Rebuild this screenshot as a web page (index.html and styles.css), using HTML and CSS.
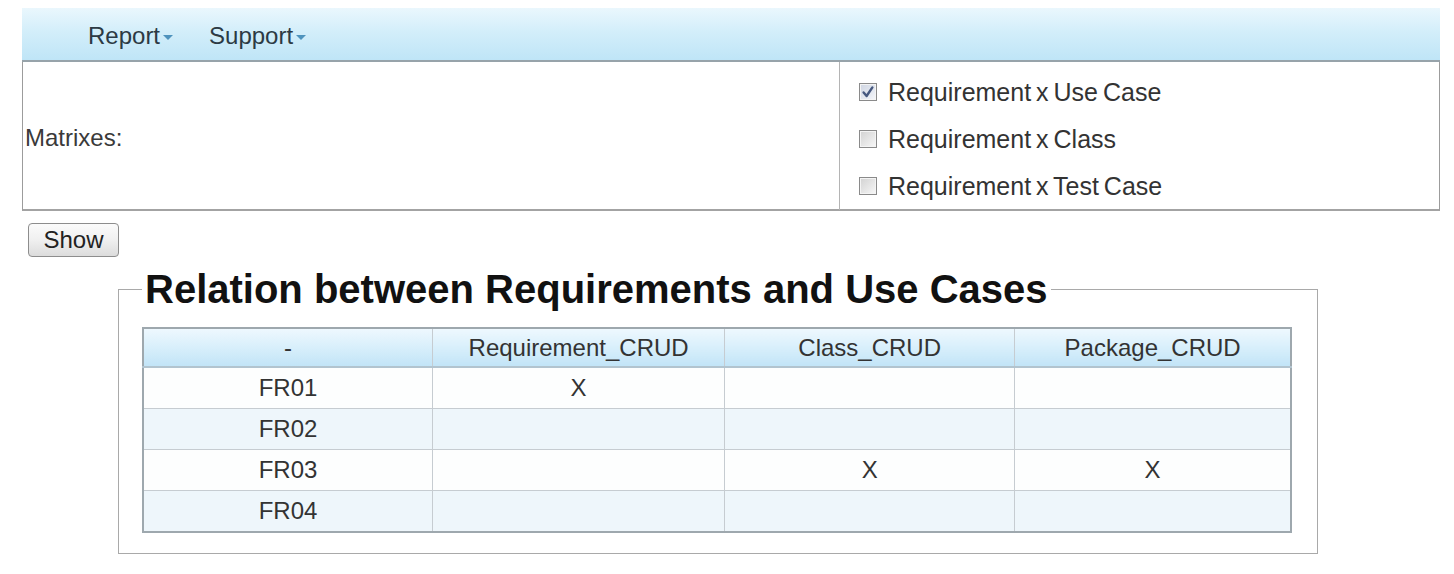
FILE: index.html
```html
<!DOCTYPE html>
<html>
<head>
<meta charset="utf-8">
<title>Matrixes</title>
<link rel="stylesheet" href="styles.css">
</head>
<body>
<div class="page">
  <nav class="navbar">
    <span class="menu-item">Report<span class="caret"></span></span>
    <span class="menu-item">Support<span class="caret"></span></span>
  </nav>
  <div class="matrix-box">
    <div class="matrix-label">Matrixes:</div>
    <div class="matrix-options">
      <label class="option"><span class="box checked"><svg viewBox="0 0 16 16" width="16" height="16"><path d="M3.6 8.4 L6.6 12 L12.4 3.4" fill="none" stroke="#46587f" stroke-width="2.4" stroke-linecap="round" stroke-linejoin="round"/></svg></span>Requirement x Use Case</label>
      <label class="option"><span class="box"></span>Requirement x Class</label>
      <label class="option"><span class="box"></span>Requirement x Test Case</label>
    </div>
  </div>
  <button class="show-btn">Show</button>
  <fieldset class="relation">
    <legend>Relation between Requirements and Use Cases</legend>
    <table class="matrix">
      <thead>
        <tr><th class="c1">-</th><th class="c2">Requirement_CRUD</th><th class="c3">Class_CRUD</th><th class="c4">Package_CRUD</th></tr>
      </thead>
      <tbody>
        <tr><td>FR01</td><td>X</td><td></td><td></td></tr>
        <tr class="alt"><td>FR02</td><td></td><td></td><td></td></tr>
        <tr><td>FR03</td><td></td><td>X</td><td>X</td></tr>
        <tr class="alt"><td>FR04</td><td></td><td></td><td></td></tr>
      </tbody>
    </table>
  </fieldset>
</div>
</body>
</html>
```
FILE: styles.css
```css
html, body {
  margin: 0;
  padding: 0;
  background: #ffffff;
}
body {
  font-family: "Liberation Sans", Arial, sans-serif;
  color: #2f2f2f;
}
.page {
  padding: 8px 14px 0 22px;
}
.navbar {
  height: 52px;
  display: flex;
  align-items: center;
  gap: 36px;
  padding-left: 66px;
  background: linear-gradient(to bottom, #eaf7fd 0%, #d3eefa 45%, #bfe5f7 100%);
  border-bottom: 2px solid #97a3aa;
  font-size: 24px;
  color: #2c3a44;
}
.menu-item {
  display: inline-flex;
  align-items: center;
  padding-top: 4px;
}
.caret {
  display: inline-block;
  width: 0;
  height: 0;
  margin-left: 3px;
  margin-top: 2px;
  border-left: 5px solid transparent;
  border-right: 5px solid transparent;
  border-top: 5px solid #4f93bd;
}
.matrix-box {
  display: grid;
  grid-template-columns: 817px 1fr;
  border: 1px solid #9c9c9c;
  border-top: none;
  border-bottom: 2px solid #a3a3a3;
  box-sizing: border-box;
  height: 149px;
}
.matrix-label {
  display: flex;
  align-items: center;
  padding-left: 2px;
  padding-top: 4px;
  font-size: 24px;
  color: #3a3a3a;
  border-right: 1px solid #b4b4b4;
}
.matrix-options {
  display: flex;
  flex-direction: column;
  padding-top: 7px;
  padding-left: 19px;
}
.option {
  height: 47px;
  display: flex;
  align-items: center;
  font-size: 25px;
  word-spacing: -2px;
  color: #333;
}
.box {
  width: 16px;
  height: 16px;
  border: 1px solid #8a8a8a;
  box-shadow: inset 0 0 0 1px #f4f4f4;
  background: linear-gradient(135deg, #d2d2d2 0%, #e8e8e8 60%, #f8f8f8 100%);
  margin-right: 11px;
  display: inline-flex;
  align-items: center;
  justify-content: center;
  flex: none;
  margin-top: -2px;
}
.box svg {
  display: block;
}
.box.checked {
  background: linear-gradient(135deg, #cfd5e2 0%, #e4e8f0 60%, #f6f7fa 100%);
}
.show-btn {
  display: block;
  margin: 12px 0 0 6px;
  width: 91px;
  height: 34px;
  font-family: "Liberation Sans", Arial, sans-serif;
  font-size: 24px;
  color: #222;
  background: linear-gradient(to bottom, #fbfbfb 0%, #f0f0f0 50%, #dcdcdc 100%);
  border: 1px solid #8d8d8d;
  border-radius: 4px;
  padding: 0;
}
.relation {
  margin: 12px 0 0 96px;
  width: 1200px;
  box-sizing: border-box;
  border: 1px solid #a9a9a9;
  border-radius: 0;
  padding: 0 25px 20px 23px;
  min-width: 0;
}
.relation legend {
  font-size: 40px;
  font-weight: bold;
  color: #111;
  padding: 0 3px;
  line-height: 40px;
  margin-left: 0;
}
.matrix {
  margin-top: 18px;
  width: 1150px;
  border-collapse: collapse;
  border: 2px solid #9ea8ae;
  font-size: 24px;
  color: #333;
}
.matrix th, .matrix td {
  border: 1px solid #c6ccd1;
  text-align: center;
  font-weight: normal;
  padding: 0;
  height: 40px;
}
.matrix th {
  height: 37px;
  background: linear-gradient(to bottom, #eef8fe 0%, #d8effb 50%, #c2e4f7 100%);
  border-bottom: 2px solid #b2c4cf;
  color: #333;
}
.matrix .c1 { width: 291px; }
.matrix .c2 { width: 292px; }
.matrix .c3 { width: 291px; }
.matrix .c4 { width: 276px; }
.matrix tbody tr { background: #fdfefe; }
.matrix tbody tr.alt { background: #eef6fb; }
```
